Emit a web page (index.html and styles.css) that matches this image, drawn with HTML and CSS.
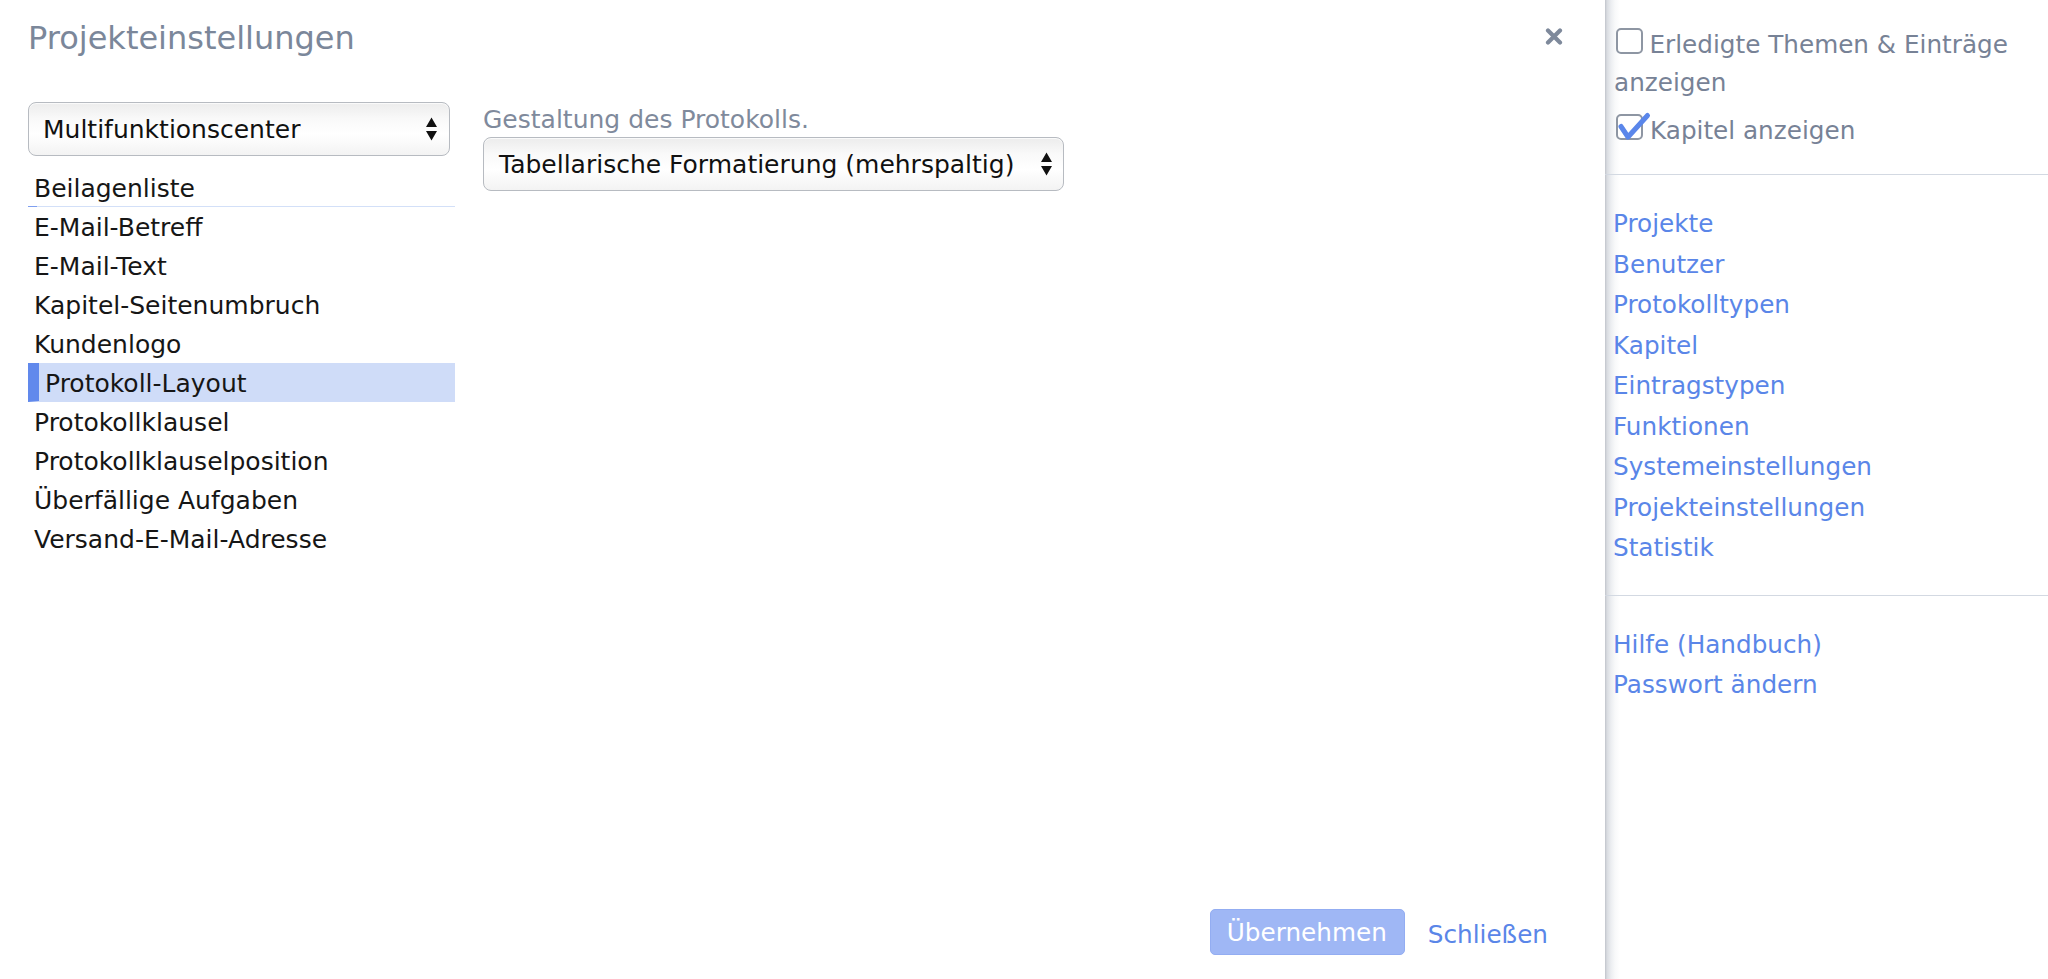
FILE: index.html
```html
<!DOCTYPE html>
<html lang="de">
<head>
<meta charset="utf-8">
<title>Projekteinstellungen</title>
<link rel="stylesheet" href="styles.css">
</head>
<body>
<div class="page">
  <div class="modal">
    <div class="modal-head">
      <h1 class="modal-title">Projekteinstellungen</h1>
      <svg class="close" width="18" height="17" viewBox="0 0 18 17" aria-label="Schließen"><path d="M3 2.5 L15 14.5 M15 2.5 L3 14.5" stroke="#7e899b" stroke-width="4.2" stroke-linecap="round" fill="none"/></svg>
    </div>
    <div class="modal-body">
      <div class="col-left">
        <div class="select select-left">
          <span>Multifunktionscenter</span>
          <svg class="arrows" width="11" height="24" viewBox="0 0 11 24"><path d="M0 10 L5.5 0.5 L11 10 Z M0 14 L11 14 L5.5 23.5 Z" fill="#111"/></svg>
        </div>
        <ul class="list">
          <li class="list-item first">Beilagenliste</li>
          <li class="list-item">E-Mail-Betreff</li>
          <li class="list-item">E-Mail-Text</li>
          <li class="list-item">Kapitel-Seitenumbruch</li>
          <li class="list-item">Kundenlogo</li>
          <li class="list-item active">Protokoll-Layout</li>
          <li class="list-item">Protokollklausel</li>
          <li class="list-item">Protokollklauselposition</li>
          <li class="list-item">Überfällige Aufgaben</li>
          <li class="list-item">Versand-E-Mail-Adresse</li>
        </ul>
      </div>
      <div class="col-right">
        <div class="field-label">Gestaltung des Protokolls.</div>
        <div class="select select-right">
          <span>Tabellarische Formatierung (mehrspaltig)</span>
          <svg class="arrows" width="11" height="24" viewBox="0 0 11 24"><path d="M0 10 L5.5 0.5 L11 10 Z M0 14 L11 14 L5.5 23.5 Z" fill="#111"/></svg>
        </div>
      </div>
    </div>
    <div class="modal-foot">
      <span class="btn-primary">Übernehmen</span>
      <span class="link foot-link">Schließen</span>
    </div>
  </div>
  <aside class="sidebar">
    <div class="options">
      <div class="option"><svg class="cb" width="27" height="26" viewBox="0 0 27 26"><rect x="1" y="1" width="25" height="24" rx="4" fill="#fff" stroke="#8e96a3" stroke-width="2"/></svg>Erledigte Themen &amp; Einträge anzeigen</div>
      <div class="option option-2"><svg class="cb-checked" width="34" height="30" viewBox="0 0 34 30"><rect x="1" y="4" width="25" height="24" rx="4" fill="#fff" stroke="#8e96a3" stroke-width="2"/><path d="M5 15.5 L12 26 L31.5 4.5" stroke="#5a86ea" stroke-width="5" stroke-linecap="round" stroke-linejoin="round" fill="none"/></svg>Kapitel anzeigen</div>
    </div>
    <nav class="nav">
      <a class="link nav-link">Projekte</a>
      <a class="link nav-link">Benutzer</a>
      <a class="link nav-link">Protokolltypen</a>
      <a class="link nav-link">Kapitel</a>
      <a class="link nav-link">Eintragstypen</a>
      <a class="link nav-link">Funktionen</a>
      <a class="link nav-link">Systemeinstellungen</a>
      <a class="link nav-link">Projekteinstellungen</a>
      <a class="link nav-link">Statistik</a>
    </nav>
    <nav class="nav nav-2">
      <a class="link nav-link">Hilfe (Handbuch)</a>
      <a class="link nav-link">Passwort ändern</a>
    </nav>
  </aside>
</div>
</body>
</html>
```

FILE: styles.css
```css
html, body {
  margin: 0;
  padding: 0;
  background: #fff;
}
body {
  font-family: "DejaVu Sans", "Noto Sans", sans-serif;
  font-size: 24.7px;
  color: #161616;
}
.page {
  display: flex;
  width: 2048px;
  height: 979px;
  overflow: hidden;
}
.modal {
  width: 1605px;
  flex: none;
  height: 979px;
  box-sizing: border-box;
  padding: 18px 42px 24px 28px;
  display: flex;
  flex-direction: column;
  background: #fff;
}
.modal-head {
  display: flex;
  justify-content: space-between;
  align-items: flex-start;
  height: 40px;
}
.modal-title {
  margin: 0;
  font-size: 32px;
  line-height: 40px;
  font-weight: normal;
  color: #7b879a;
}
.close {
  margin-top: 10px;
  display: block;
}
.modal-body {
  display: flex;
  gap: 28px;
  margin-top: 44px;
  font-size: 25px;
}
.col-left {
  width: 427px;
  flex: none;
}
.select {
  box-sizing: border-box;
  display: flex;
  align-items: center;
  justify-content: space-between;
  border: 1.5px solid #b7bbc1;
  border-radius: 8px;
  background: linear-gradient(#ececec 0, #f9f9f9 30%, #fff 60%, #f3f3f3 100%);
  box-shadow: inset 0 1px 1px rgba(255,255,255,.8);
  color: #111;
}
.select-left {
  width: 422px;
  height: 54px;
  padding: 0 12px 0 14px;
}
.select-right {
  width: 581px;
  height: 54px;
  padding: 0 11px 0 15px;
}
.arrows {
  display: block;
  flex: none;
}
.list {
  list-style: none;
  margin: 12px 0 0;
  padding: 0;
}
.list-item {
  padding: 3px 0 0 6px;
  line-height: 35px;
  border-bottom: 1px solid transparent;
  white-space: nowrap;
}
.list-item.first {
  border-bottom: 1px solid #d3e0f8;
  border-image: linear-gradient(to right, #7f9ff0 10px, #d3e0f8 10px) 1;
}
.list-item.active {
  background: #cfdcf8;
  border-left: 11px solid #6189ec;
  padding-left: 6px;
}
.field-label {
  line-height: 35px;
  color: #7f8a9c;
}
.modal-foot {
  margin-top: auto;
  display: flex;
  justify-content: flex-end;
  align-items: center;
  gap: 23px;
  padding-right: 15px;
}
.btn-primary {
  box-sizing: border-box;
  height: 46px;
  padding: 2px 17px 0 16px;
  line-height: 42px;
  background: #9fb7f5;
  border: 1px solid #93adf2;
  border-radius: 5px;
  color: #fff;
}
.link {
  color: #5a86e8;
  text-decoration: none;
}
.foot-link {
  padding-top: 4px;
}
.sidebar {
  flex: 1;
  height: 979px;
  box-sizing: border-box;
  padding-top: 26px;
  background: linear-gradient(to right, #c1c4cb 0, #d9dce1 2px, #eceef1 6px, #f8f9fa 10px, #fff 15px);
  color: #778296;
}
.options {
  padding: 0 10px 24px 9px;
  border-bottom: 1px solid #d3d9e2;
}
.option {
  line-height: 38px;
}
.option-2 {
  margin-top: 9px;
}
.cb {
  vertical-align: -1px;
  margin-left: 2px;
  margin-right: 6.5px;
}
.cb-checked {
  vertical-align: -2px;
  margin-left: 2px;
  overflow: visible;
}
.nav {
  display: flex;
  flex-direction: column;
  padding: 29px 0 26px 8px;
  border-bottom: 1px solid #d3d9e2;
}
.nav-2 {
  border-bottom: none;
}
.nav-link {
  line-height: 40.5px;
}
```
